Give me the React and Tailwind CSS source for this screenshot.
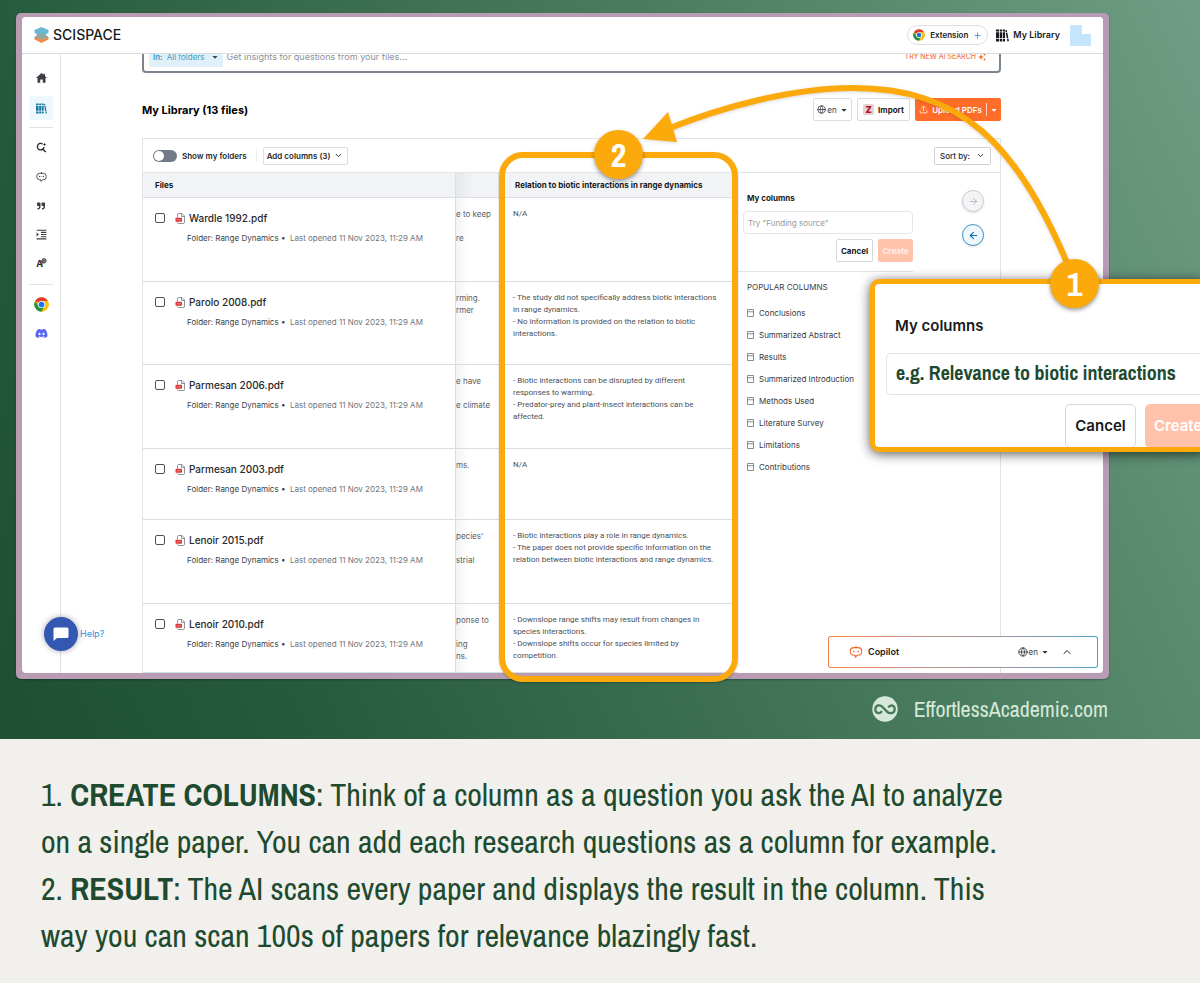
import { FaDiscord, FaQuoteRight, FaCaretDown } from 'react-icons/fa'
import { MdFormatIndentIncrease } from 'react-icons/md'
import { ArrowLeft, ArrowRight, ChevronDown, ChevronUp, Globe, Plus, Upload } from 'lucide-react'

const FILES = [
  {
    name: 'Wardle 1992.pdf',
    height: 'h-[84px]',
    cut: ['e to keep', '', 're'],
    relation: ['N/A'],
  },
  {
    name: 'Parolo 2008.pdf',
    height: 'h-[83px]',
    cut: ['rming.', 'rmer'],
    relation: [
      '- The study did not specifically address biotic interactions',
      'in range dynamics.',
      '- No information is provided on the relation to biotic',
      'interactions.',
    ],
  },
  {
    name: 'Parmesan 2006.pdf',
    height: 'h-[84px]',
    cut: ['e have', '', 'e climate'],
    relation: [
      '- Biotic interactions can be disrupted by different',
      'responses to warming.',
      '- Predator-prey and plant-insect interactions can be',
      'affected.',
    ],
  },
  {
    name: 'Parmesan 2003.pdf',
    height: 'h-[71px]',
    cut: ['ms.'],
    relation: ['N/A'],
  },
  {
    name: 'Lenoir 2015.pdf',
    height: 'h-[84px]',
    cut: ["pecies'", '', 'strial'],
    relation: [
      '- Biotic interactions play a role in range dynamics.',
      '- The paper does not provide specific information on the',
      'relation between biotic interactions and range dynamics.',
    ],
  },
  {
    name: 'Lenoir 2010.pdf',
    height: 'h-[69px]',
    cut: ['ponse to', '', 'ing', 'ns.'],
    relation: [
      '- Downslope range shifts may result from changes in',
      'species interactions.',
      '- Downslope shifts occur for species limited by',
      'competition.',
    ],
  },
]

const POPULAR = [
  'Conclusions',
  'Summarized Abstract',
  'Results',
  'Summarized Introduction',
  'Methods Used',
  'Literature Survey',
  'Limitations',
  'Contributions',
]

function ChromeLogo({ className }) {
  return (
    <svg viewBox="0 0 48 48" className={className} aria-hidden="true">
      <circle cx="24" cy="24" r="23" fill="#fbc116" />
      <path d="M24 24 4 12.500A23 23 0 0 1 44 12.500H24Z" fill="#e33b2e" />
      <path d="M4 12.500A23 23 0 0 0 24 47L34 29.700 24 24 14 29.700Z" fill="#229342" />
      <path d="M24 12.500H44A23 23 0 0 1 24 47L34 29.700Z" fill="#fbc116" />
      <circle cx="24" cy="24" r="11.500" fill="#fff" />
      <circle cx="24" cy="24" r="9" fill="#1a73e8" />
    </svg>
  )
}

function SciSpaceLogo() {
  return (
    <svg viewBox="0 0 15 16" className="h-4 w-[15px]" aria-hidden="true">
      <path d="M.5 10 4 8h7l3.500 2v2.500L7.500 16 .5 12.500Z" fill="#f58a4b" />
      <path d="M.5 3 7.500 0l7 3v2.500L11.500 8l3 2.300-7 1.700-7-1.700 3-2.300L.5 5.500Z" fill="#66b8d4" />
      <path d="m3.500 8 4-1.500 4 1.500 3 2.300-7 2.400-7-2.400Z" fill="#9aa79c" />
    </svg>
  )
}

function HomeIcon() {
  return (
    <svg viewBox="0 0 22 20" className="h-[10px] w-[11px]" fill="currentColor" aria-hidden="true">
      <path d="M11 0 15 3.600V1.500h3v4.800L22 10h-3v9.500h-5.500V13h-5v6.500H3V10H0Z" />
    </svg>
  )
}

function BooksIcon({ className }) {
  return (
    <svg viewBox="0 0 26 26" className={className} fill="currentColor" aria-hidden="true">
      <path d="M0 1h6v4H0ZM0 6.500h6v12H0ZM0 20h6v5H0ZM7.500 1h4.500v4H7.500ZM7.500 6.500h4.500v12H7.500ZM7.500 20h4.500v5H7.500ZM13.500 1H18v4h-4.500ZM13.500 6.500H18v12h-4.500ZM13.500 20H18v5h-4.500Z" />
      <path d="m18.500 3 3-.8.8 3.300-3 .8ZM19.600 7.800l3-.8 2 11.200-3 .8ZM21.900 20.500l3-.8 1 4.400-3 .8Z" />
    </svg>
  )
}

function PdfIcon() {
  return (
    <svg viewBox="0 0 20 22" className="h-[11px] w-[10px] shrink-0" aria-hidden="true">
      <path d="M5 9V3.500A2.500 2.500 0 0 1 7.500 1H14l5 5v12.500a2.500 2.500 0 0 1-2.500 2.500h-9A2.500 2.500 0 0 1 5 18.500" fill="none" stroke="#6b6f75" strokeWidth="1.500" />
      <path d="M13 1v6h6" fill="none" stroke="#6b6f75" strokeWidth="1.500" />
      <rect x="1" y="9.500" width="13" height="8" rx="1.500" fill="#dc3737" />
      <path d="M3.500 13.500h8" stroke="#f3a3a3" strokeWidth="1.500" />
    </svg>
  )
}

function SearchSparkIcon() {
  return (
    <svg viewBox="0 0 20 20" className="size-[11px]" fill="none" stroke="#26292d" strokeWidth="2.400" aria-hidden="true">
      <path d="M12 3.500A6 6 0 1 0 14.500 9" />
      <path d="m11.500 12.500 6.500 5.500" />
      <path d="m15.500 1 .9 2.600L19 4.500l-2.600.9-.9 2.600-.9-2.600L12 4.500l2.600-.9Z" fill="#26292d" stroke="none" />
    </svg>
  )
}

function BotIcon({ className }) {
  return (
    <svg viewBox="0 0 24 22" className={className} fill="none" stroke="currentColor" strokeWidth="2" aria-hidden="true">
      <path d="M12 0v3M8 3h8a6.500 6.500 0 0 1 6.500 6.500v1A6.500 6.500 0 0 1 16 17h-2l-3 3.500-.5-3.500H8a6.500 6.500 0 0 1-6.500-6.500v-1A6.500 6.500 0 0 1 8 3Z" />
      <circle cx="8" cy="10" r="1.500" fill="currentColor" stroke="none" />
      <circle cx="12" cy="10" r=".8" fill="currentColor" stroke="none" />
      <circle cx="16" cy="10" r="1.500" fill="currentColor" stroke="none" />
    </svg>
  )
}

function ParaphraseIcon() {
  return (
    <span className="relative pr-[3px] text-[9px] leading-[11px] font-bold text-[#26292d]">
      A
      <svg viewBox="0 0 10 14" className="absolute top-0 left-[5px] h-[8px] w-[6px]" fill="none" stroke="#26292d" strokeWidth="1.500" aria-hidden="true">
        <circle cx="5" cy="5" r="3.800" />
        <path d="M1.500 13V5h7M5 1v8" />
      </svg>
    </span>
  )
}

function ColumnIcon() {
  return (
    <svg viewBox="0 0 14 16" className="h-2 w-[7px] shrink-0" fill="none" stroke="#6b7078" strokeWidth="1.600" aria-hidden="true">
      <path d="M1 1h12v14H1ZM1 5.500h12" />
    </svg>
  )
}

function Header() {
  return (
    <header className="flex h-[37px] items-center border-b border-[#d9dce0] bg-white px-3">
      <SciSpaceLogo />
      <span className="ml-1 text-[14px] leading-4 font-medium text-[#17191c]">SCISPACE</span>
      <div className="ml-auto flex items-center">
        <button className="flex h-5 items-center gap-[5px] rounded-full border border-[#dcdfe3] px-[5px] text-[8px] font-semibold text-[#222]">
          <ChromeLogo className="size-3" />
          <span>Extension</span>
          <Plus className="size-[9px] text-[#2b86bd]" />
        </button>
        <a href="#library" className="ml-2 flex items-center gap-1 text-[9px] font-semibold text-[#17191c]">
          <BooksIcon className="size-[13px]" />
          My Library
        </a>
        <svg viewBox="0 0 21 21" className="ml-2.5 size-[21px]" aria-hidden="true">
          <path d="M1 0h11v9h9v11a1 1 0 0 1-1 1H1a1 1 0 0 1-1-1V1a1 1 0 0 1 1-1Z" fill="#c5e5fd" />
        </svg>
      </div>
    </header>
  )
}

function Sidebar() {
  return (
    <nav className="flex w-[39px] shrink-0 flex-col items-center border-r border-[#e1e4e8] pt-3 text-[#3b3e43]">
      <a href="#home" aria-label="Home" className="flex h-6 items-center"><HomeIcon /></a>
      <a href="#library" aria-label="Library" className="mt-[6px] flex size-6 items-center justify-center rounded-sm bg-[#ecf8fe] text-[#1878a0]">
        <BooksIcon className="size-[11px]" />
      </a>
      <hr className="mt-[7px] mb-[5px] w-6 border-[#dfe2e6]" />
      <a href="#search" aria-label="Search" className="flex h-[29px] items-center"><SearchSparkIcon /></a>
      <a href="#chat" aria-label="Chat" className="flex h-[29px] items-center"><BotIcon className="h-[10px] w-[11px]" /></a>
      <a href="#cite" aria-label="Citations" className="flex h-[29px] items-center"><FaQuoteRight className="size-2" /></a>
      <a href="#extract" aria-label="Extract" className="flex h-[29px] items-center"><MdFormatIndentIncrease className="size-[13px]" /></a>
      <a href="#paraphrase" aria-label="Paraphraser" className="flex h-[29px] items-center"><ParaphraseIcon /></a>
      <hr className="mt-[6px] mb-[7px] w-6 border-[#dfe2e6]" />
      <a href="#chrome" aria-label="Chrome extension" className="flex h-6 items-center"><ChromeLogo className="size-[15px]" /></a>
      <a href="#discord" aria-label="Discord" className="mt-[5px] flex h-6 items-center"><FaDiscord className="size-[13px] text-[#5865f2]" /></a>
    </nav>
  )
}

function FilesTable() {
  return (
    <table className="w-[595px] shrink-0 table-fixed border-separate border-spacing-0 text-left">
      <colgroup>
        <col className="w-[313px]" />
        <col className="w-[43px]" />
        <col className="w-[239px]" />
      </colgroup>
      <thead>
        <tr className="h-[25px] bg-[#f2f3f5] text-[8px] leading-3">
          <th className="border-r border-b border-[#dadde3] py-0 pl-3 font-bold">Files</th>
          <th className="border-b border-[#dadde3] bg-linear-to-r from-[#e6e8eb] to-[#f2f3f5] to-40% p-0" aria-label="Hidden column" />
          <th className="border-b border-[#dadde3] py-0 pl-4 font-bold whitespace-nowrap">
            Relation to biotic interactions in range dynamics
          </th>
        </tr>
      </thead>
      <tbody>
        {FILES.map(file => (
          <tr key={file.name} className={`${file.height} align-top`}>
            <td className="border-r border-b border-[#dadde3] py-0 pt-3 pl-3">
              <label className="flex h-4 items-center text-[10px] leading-4 font-medium text-[#26292d]">
                <input type="checkbox" className="mr-[10px] size-[10px] appearance-none rounded-[2px] border border-[#4d5157]" />
                <PdfIcon />
                <span className="ml-1">{file.name}</span>
              </label>
              <p className="mt-[6px] pl-8 text-[8px] leading-3 whitespace-nowrap text-[#6f747b]">
                <span className="text-[#3d4148]">Folder: Range Dynamics • </span>&nbsp;Last opened 11 Nov 2023, 11:29 AM
              </p>
            </td>
            <td className="border-b border-[#dadde3] bg-linear-to-r from-[#f2f3f5] to-white to-30% p-0 pt-[10px] text-[8px] leading-3 whitespace-nowrap text-[#5a5e64]">
              {file.cut.map((line, i) => (
                <div key={i} className="h-3">{line}</div>
              ))}
            </td>
            <td className="border-b border-[#dadde3] p-0 pt-[10px] pl-[14px] font-[Roboto,sans-serif] text-[8px] leading-3 whitespace-nowrap text-[#4c5056]">
              {file.relation.map(line => (
                <div key={line}>{line}</div>
              ))}
            </td>
          </tr>
        ))}
      </tbody>
    </table>
  )
}

function ColumnsPanel() {
  return (
    <div className="flex flex-1 items-start justify-between pr-4">
      <div className="w-[175px] pt-[17px]">
        <label htmlFor="column-name" className="block pl-[9px] text-[8px] leading-4 font-bold">
          My columns
        </label>
        <input
          id="column-name"
          placeholder={'Try "Funding source"'}
          className="mt-[5px] ml-[5px] block h-[23px] w-[170px] rounded-sm border border-[#e2e5e9] pl-1 text-[8px] placeholder:text-[#96999e]"
        />
        <div className="mt-[5px] flex justify-end gap-[5px] text-[8px] font-bold">
          <button className="h-[23px] w-[37px] rounded-xs border border-[#d5d8dd]">Cancel</button>
          <button className="h-[23px] w-[35px] rounded-xs bg-[#ffc3ab] text-[#ffefe8]">Create</button>
        </div>
        <hr className="mt-[9px] border-[#e1e4e8]" />
        <h3 className="mt-[7px] pl-[9px] text-[8px] leading-4 text-[#3a3e44]">POPULAR COLUMNS</h3>
        <ul className="mt-[7px] pl-[9px] text-[8px] leading-[22px] text-[#34383e]">
          {POPULAR.map(item => (
            <li key={item} className="flex items-center gap-[5px]">
              <ColumnIcon />
              {item}
            </li>
          ))}
        </ul>
      </div>
      <div className="flex flex-col gap-3 pt-[17px]">
        <button aria-label="Scroll right" className="flex size-[22px] items-center justify-center rounded-full border border-[#cdd0d4] bg-[#f3f4f5] text-[#b4b7bb] shadow">
          <ArrowRight className="size-[11px]" />
        </button>
        <button aria-label="Scroll left" className="flex size-[22px] items-center justify-center rounded-full border border-[#4596c4] bg-[#eef8fe] text-[#1473a8] shadow">
          <ArrowLeft className="size-[11px]" strokeWidth={2.500} />
        </button>
      </div>
    </div>
  )
}

function Library() {
  return (
    <main className="min-w-0 flex-1 overflow-hidden pr-[102px] pl-[81px]">
      <div className="-mt-[22px] flex h-[41px] items-end justify-between rounded-sm border-2 border-[#7c858e] px-[5px] pb-[4px] text-[9px]">
        <div className="flex items-center gap-1">
          <button className="flex h-5 items-center gap-1 rounded-xs bg-[#dff0f8] px-1 text-[8px] text-[#3e9cc6]">
            <span className="font-semibold">In:</span> All folders <FaCaretDown className="ml-0.5 size-2 text-[#42464c]" />
          </button>
          <span className="leading-5 text-[#8c9096]">Get insights for questions from your files...</span>
        </div>
        <a href="#search" className="mr-2 flex items-center gap-0.5 text-[7px] leading-5 font-medium text-[#f07a48]">
          TRY NEW AI SEARCH
          <svg viewBox="0 0 16 16" className="size-2" fill="#f0692e" aria-hidden="true">
            <path d="m6 2 1.700 4.300L12 8l-4.300 1.700L6 14 4.300 9.700 0 8l4.300-1.700Z" />
            <circle cx="13" cy="3" r="2" />
            <circle cx="13" cy="13" r="2" />
          </svg>
        </a>
      </div>

      <div className="mt-[25px] flex h-[23px] items-center gap-[5px]">
        <h1 className="mr-auto text-[11px] leading-4 font-bold text-black">My Library (13 files)</h1>
        <button className="flex h-full w-[39px] items-center justify-center gap-px rounded-xs border border-[#dadde2] text-[8px] text-[#33373c]">
          <Globe className="size-[9px]" />
          <span>en</span>
          <FaCaretDown className="ml-0.5 size-2" />
        </button>
        <button className="flex h-full w-[53px] items-center justify-center gap-1 rounded-xs border border-[#dadde2] text-[8px] font-bold text-[#222]">
          <span className="flex size-[11px] items-center justify-center rounded-xs bg-[#e4d3d3] text-[9px] font-black text-[#b3122d]">Z</span>
          <span>Import</span>
        </button>
        <div className="flex h-full w-[86px] items-center rounded-xs bg-[#ff6d29] text-white">
          <button className="flex h-full flex-1 items-center justify-center gap-1 text-[8px] font-semibold whitespace-nowrap">
            <Upload className="size-[9px]" />
            <span>Upload PDFs</span>
          </button>
          <button aria-label="More upload options" className="flex h-[13px] items-center border-l border-white/70 px-[3px]">
            <FaCaretDown className="size-2" />
          </button>
        </div>
      </div>

      <section className="mt-[17px] border-x border-t border-[#e1e4e8]">
        <div className="flex h-[34px] items-center border-b border-[#e1e4e8] pr-[9px] pl-[10px]">
          <label className="flex items-center gap-[5px] text-[8px] font-semibold text-[#26292d]">
            <span className="relative flex h-3 w-6 items-center">
              <input type="checkbox" className="peer h-3 w-6 appearance-none rounded-full bg-[#727b85]" />
              <span className="pointer-events-none absolute left-px size-[10px] rounded-full bg-white peer-checked:left-[13px]" />
            </span>
            Show my folders
          </label>
          <span className="mr-[6px] ml-[9px] h-[13px] border-l border-[#eceef0]" />
          <button className="flex h-[18px] w-[85px] items-center justify-center gap-1 rounded-xs border border-[#dadde2] text-[8px] font-semibold whitespace-nowrap text-[#26292d]">
            Add columns (3)
            <ChevronDown className="size-[9px]" strokeWidth={2.500} />
          </button>
          <button className="ml-auto flex h-[18px] w-[57px] items-center justify-center gap-1.5 rounded-xs border border-[#cfd3d8] text-[8px] font-medium whitespace-nowrap text-[#26292d]">
            Sort by:
            <ChevronDown className="size-[9px]" strokeWidth={2.500} />
          </button>
        </div>
        <div className="flex">
          <FilesTable />
          <ColumnsPanel />
        </div>
      </section>
    </main>
  )
}

function AppWindow() {
  return (
    <div className="mr-[91px] ml-4 rounded-[5px] bg-[#b79cb3] px-[6px] pt-1 pb-[6px] shadow-[0_1px_2px_rgba(0,0,0,0.3)]">
      <div className="relative overflow-hidden rounded-[4px] bg-white font-[Inter,sans-serif] text-[#17191c]">
        <Header />
        <div className="flex">
          <Sidebar />
          <Library />
        </div>

        {/* Floating help button */}
        <a href="#help" className="absolute bottom-[22px] left-[22px] flex items-center gap-0.5 text-[9px] text-[#2e8fe0]">
          <span className="flex size-[34px] items-center justify-center rounded-full bg-[#3457b2] shadow-[0_0_6px_rgba(0,0,0,0.35)]">
            <svg viewBox="0 0 16 14" className="h-[14px] w-4" fill="#fff" aria-hidden="true">
              <path d="M2 .5h12a1.500 1.500 0 0 1 1.500 1.500v7.500A1.500 1.500 0 0 1 14 11H4l-3.500 3V2A1.500 1.500 0 0 1 2 .5Z" />
            </svg>
          </span>
          Help?
        </a>

        {/* Copilot bar */}
        <div className="absolute right-[5px] bottom-[5px] w-[270px] rounded-[3px] bg-linear-to-r from-[#f0804e] to-[#4d9cc8] p-px">
          <div className="flex h-[30px] items-center rounded-[2px] bg-white pr-6 pl-5">
            <BotIcon className="h-3 w-[14px] text-[#ee6a2c]" />
            <span className="ml-[5px] text-[9px] font-semibold">Copilot</span>
            <button className="ml-auto flex items-center gap-px text-[8px] text-[#33373c]">
              <Globe className="size-[10px]" />
              <span>en</span>
              <FaCaretDown className="ml-0.5 size-2" />
            </button>
            <button aria-label="Expand copilot" className="ml-3">
              <ChevronUp className="size-3" />
            </button>
          </div>
        </div>
      </div>
    </div>
  )
}

function Badge({ children, className }) {
  return (
    <span className={`absolute flex size-[49px] items-center justify-center rounded-full bg-[#fcaa0b] text-[34px] leading-none font-bold text-white shadow-[0_2px_4px_rgba(0,0,0,0.4)] ${className}`}>
      {children}
    </span>
  )
}

function Callout() {
  return (
    <div className="absolute top-[279px] -right-2 left-[870px] h-[173px] overflow-hidden rounded-[9px] border-[5px] border-[#fcaa0b] bg-white font-[Inter,sans-serif] shadow-[0_2px_12px_rgba(0,0,0,0.65)]">
      <label htmlFor="callout-name" className="mt-[30px] block pl-5 text-[15px] leading-6 font-semibold text-[#17191c]">
        My columns
      </label>
      <input
        id="callout-name"
        defaultValue="e.g. Relevance to biotic interactions"
        className="mt-[15px] ml-[11px] block h-[42px] w-[340px] rounded-[5px] border border-[#dfe2e6] pb-[3px] pl-[9px] font-['Liberation_Sans_Narrow','Archivo_Narrow',sans-serif] text-[20px] font-bold text-[#1e4a30]"
      />
      <div className="mt-[9px] flex gap-[9px] pl-[190px] text-[15px] font-semibold">
        <button className="h-[44px] w-[71px] shrink-0 rounded-[5px] border border-[#d5d8dd] text-[#17191c]">Cancel</button>
        <button className="h-[44px] w-[72px] shrink-0 rounded-[5px] bg-[#ffc3ab] pl-[9px] text-left text-white">Create</button>
      </div>
    </div>
  )
}

export default function App() {
  return (
    <div className="flex min-h-screen flex-col overflow-x-hidden bg-[#f1f0ec] font-['Liberation_Sans_Narrow','Archivo_Narrow',sans-serif]">
      <div className="relative overflow-hidden bg-linear-[65deg,#1d5033_0%,#265a3c_20%,#4b7e60_65%,#6f9d85_100%] pt-[13px]">
        <AppWindow />

        <footer className="flex h-[60px] items-center justify-end gap-4 pr-[92px] text-[22px] text-[#d6e8da]">
          <svg viewBox="0 0 26 26" className="size-[26px]" aria-hidden="true">
            <circle cx="13" cy="13" r="12.700" fill="#d6e8da" />
            <path
              d="M9.500 15.800C7.500 18.300 3.200 17.200 3.300 13.200 3.400 9 8 8.200 10.500 11L15 15.600C17.800 18.400 22.600 17.400 22.700 13.200 22.800 9.300 19 8.600 16.800 10.800"
              fill="none"
              stroke="#477a5b"
              strokeWidth="2.300"
              strokeLinecap="round"
            />
          </svg>
          EffortlessAcademic.com
        </footer>

        {/* Annotations drawn over the window */}
        <div className="pointer-events-none absolute top-[152px] left-[499px] h-[530px] w-[239px] rounded-[24px] border-[6px] border-[#fcaa0b] shadow-[0_1px_2px_rgba(0,0,0,0.3)]" />
        <Callout />
        <svg viewBox="0 0 460 220" className="pointer-events-none absolute top-[75px] left-[640px] h-[220px] w-[460px] drop-shadow" aria-hidden="true">
          <path d="M30 53C80 33 150 13 213 13 318 13 378 65 432 200" fill="none" stroke="#fcaa0b" strokeWidth="6" />
          <path d="M3 64 28 37 37 67Z" fill="#fcaa0b" />
        </svg>
        <Badge className="top-[130px] left-[594px]">2</Badge>
        <Badge className="top-[259px] left-[1050px]">1</Badge>
      </div>

      <section className="px-[41px] py-8 text-[32px] leading-[47px] text-[#1e4a30]">
        <p>
          1. <strong>CREATE COLUMNS</strong>: Think of a column as a question you ask the AI to analyze
          <br />
          on a single paper. You can add each research questions as a column for example.
        </p>
        <p>
          2. <strong>RESULT</strong>: The AI scans every paper and displays the result in the column. This
          <br />
          way you can scan 100s of papers for relevance blazingly fast.
        </p>
      </section>
    </div>
  )
}
